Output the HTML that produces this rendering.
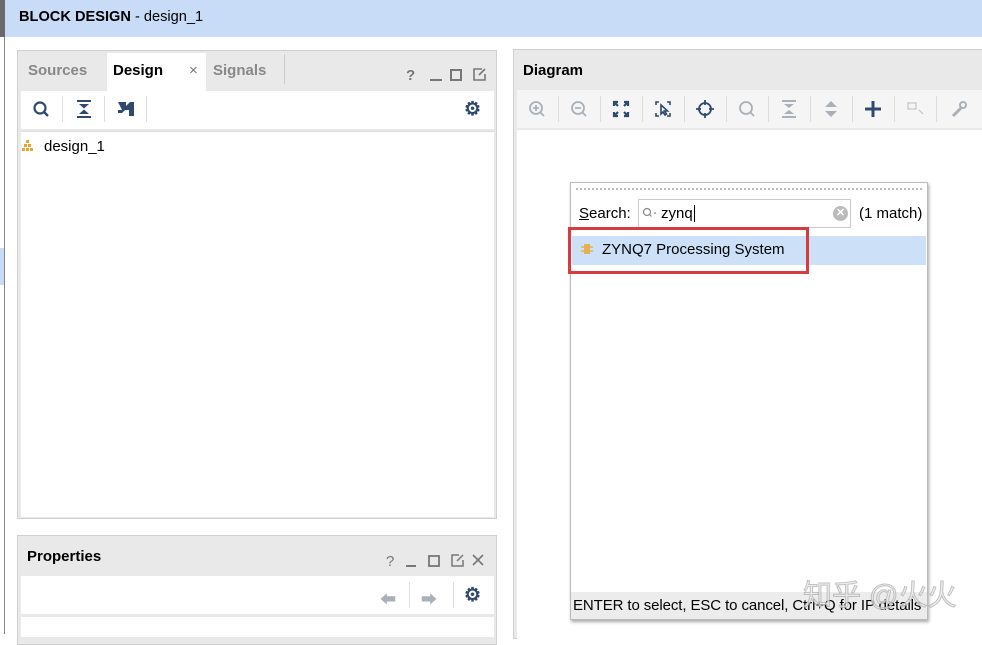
<!DOCTYPE html>
<html><head><meta charset="utf-8"><style>
*{box-sizing:border-box;margin:0;padding:0}
body{width:982px;height:634px;overflow:hidden;background:#fff;position:relative;font-family:"Liberation Sans","Noto Sans CJK SC",sans-serif;font-size:14px;color:#000}
.a{position:absolute;white-space:nowrap}
.ic{position:absolute;color:#2f4a6e;font-weight:bold}
.sep{position:absolute;width:1px;background:#dcdcdc}
.g{color:#aab0b8}
</style></head><body>
<div class="a" style="left:0;top:0;width:982px;height:37px;background:#c9dcf7"></div>
<div class="a" style="left:0;top:0;width:5px;height:37px;background:#6a6a6a"></div>
<div class="a" style="left:19px;top:9px;font-size:14.6px"><b>BLOCK DESIGN</b> - design_1</div>
<div class="a" style="left:4px;top:37px;width:1px;height:597px;background:#888"></div>
<div class="a" style="left:0;top:248px;width:4px;height:37px;background:#c9dcf7"></div>

<!-- left panel -->
<div class="a" style="left:17px;top:50px;width:480px;height:469px;background:#e9e9e9;border:1px solid #d0d0d0"></div>
<div class="a" style="left:107px;top:53px;width:99px;height:38px;background:#fff"></div>
<div class="a" style="left:28px;top:62px;color:#888;font-weight:bold;font-size:15px">Sources</div>
<div class="a" style="left:113px;top:62px;font-weight:bold;font-size:15px">Design</div>
<div class="a" style="left:189px;top:62px;color:#777;font-size:15px">×</div>
<div class="a" style="left:213px;top:62px;color:#888;font-weight:bold;font-size:15px">Signals</div>
<div class="sep" style="left:284px;top:54px;height:30px;background:#ccc"></div>
<svg class="a" style="left:404px;top:66px" width="84" height="16"><text x="2" y="14" font-family="Liberation Sans" font-weight="bold" font-size="15" fill="#777">?</text><line x1="26" y1="14" x2="38" y2="14" stroke="#777" stroke-width="2"/><rect x="47" y="4" width="10" height="10" fill="none" stroke="#777" stroke-width="2"/><path d="M78 3h-8v11h11v-6" fill="none" stroke="#777" stroke-width="1.6"/><path d="M75 9l6-6" stroke="#777" stroke-width="1.6"/></svg>
<div class="a" style="left:21px;top:91px;width:473px;height:38px;background:#fff"></div>
<svg class="a" style="left:32px;top:100px" width="18" height="18"><circle cx="8" cy="8" r="5.5" fill="none" stroke="#2f4a6e" stroke-width="2.2"/><line x1="12" y1="12" x2="16" y2="16" stroke="#2f4a6e" stroke-width="2.4"/></svg>
<div class="sep" style="left:62px;top:96px;height:26px"></div>
<svg class="a" style="left:76px;top:100px" width="16" height="18"><line x1="1" y1="1" x2="15" y2="1" stroke="#2f4a6e" stroke-width="2"/><line x1="1" y1="17" x2="15" y2="17" stroke="#2f4a6e" stroke-width="2"/><path d="M3 4h10l-5 4.5z M3 14h10l-5-4.5z" fill="#2f4a6e"/></svg>
<div class="sep" style="left:104px;top:96px;height:26px"></div>
<svg class="a" style="left:117px;top:100px" width="18" height="17"><path d="M1 2h8v4l4 -4h4v14h-5v-6h-4l-3 3h-4v-3h4z" fill="#2f4a6e"/></svg>
<div class="sep" style="left:146px;top:96px;height:26px"></div>
<div class="ic" style="left:464px;top:98px;font-size:19px">⚙</div>
<div class="a" style="left:21px;top:131px;width:473px;height:386px;background:#fff;border-top:1px solid #ddd"></div>
<svg class="a" style="left:21px;top:139px" width="14" height="13"><g fill="#e6a430"><rect x="5" y="1" width="3" height="3"/><rect x="3" y="5" width="3" height="3"/><rect x="7" y="5" width="3" height="3"/><rect x="1" y="9" width="3" height="3"/><rect x="5" y="9" width="3" height="3"/><rect x="9" y="9" width="3" height="3"/></g></svg>
<div class="a" style="left:44px;top:138px;font-size:15px">design_1</div>

<!-- properties -->
<div class="a" style="left:17px;top:535px;width:480px;height:110px;background:#e9e9e9;border:1px solid #d0d0d0"></div>
<div class="a" style="left:27px;top:548px;font-weight:bold;font-size:15px">Properties</div>
<svg class="a" style="left:384px;top:552px" width="104" height="16"><text x="2" y="14" font-family="Liberation Sans" font-size="15" fill="#777">?</text><line x1="22" y1="14" x2="32" y2="14" stroke="#777" stroke-width="2"/><rect x="45" y="4" width="10" height="10" fill="none" stroke="#777" stroke-width="1.8"/><path d="M75 3h-7v11h11v-6" fill="none" stroke="#777" stroke-width="1.5"/><path d="M73 9l6-6" stroke="#777" stroke-width="1.5"/><path d="M89 3l10 10M99 3l-10 10" stroke="#777" stroke-width="1.6"/></svg>
<div class="a" style="left:21px;top:576px;width:473px;height:38px;background:#fff"></div>
<div class="a g" style="left:380px;top:586px;font-size:16px">⬅</div>
<div class="sep" style="left:409px;top:582px;height:26px"></div>
<div class="a g" style="left:421px;top:586px;font-size:16px">➡</div>
<div class="sep" style="left:453px;top:582px;height:26px"></div>
<div class="ic" style="left:464px;top:584px;font-size:19px">⚙</div>
<div class="a" style="left:21px;top:617px;width:473px;height:20px;background:#fff"></div>

<!-- diagram -->
<div class="a" style="left:513px;top:49px;width:475px;height:590px;background:#e9e9e9;border:1px solid #d0d0d0"></div>
<div class="a" style="left:523px;top:62px;font-weight:bold;font-size:15px">Diagram</div>
<div class="a" style="left:517px;top:90px;width:470px;height:38px;background:#f5f5f5"></div>
<div class="a" style="left:517px;top:130px;width:470px;height:510px;background:#fff"></div>
<svg class="a" style="left:528px;top:100px" width="440" height="20" fill="none" stroke-width="1.8">
 <g stroke="#aab0b8"><circle cx="8" cy="8" r="6"/><path d="M12 12l4 4M5 8h6M8 5v6"/></g>
 <g stroke="#aab0b8" transform="translate(42 0)"><circle cx="8" cy="8" r="6"/><path d="M12 12l4 4M5 8h6"/></g>
 <g stroke="#2f4a6e" stroke-width="2.2" transform="translate(84 0)"><path d="M2 6V2h4M12 2h4v4M2 12v4h4M16 12v4h-4M3 3l3 3M15 3l-3 3M3 15l3-3M15 15l-3-3"/></g>
 <g stroke="#2f4a6e" stroke-width="1.6" transform="translate(126 0)"><path d="M2 5V2h3M13 2h3v3M2 13v3h3M16 13v3h-3"/><path d="M7 5l0 9 2-2 2 3 1.5-1-2-3h3z" fill="#fff"/></g>
 <g stroke="#2f4a6e" stroke-width="1.8" transform="translate(168 0)"><circle cx="9" cy="9" r="6"/><path d="M9 0v5M9 13v5M0 9h5M13 9h5"/></g>
 <g stroke="#aab0b8" transform="translate(210 0)"><circle cx="8" cy="8" r="6"/><path d="M12 12l4 4"/></g>
 <g fill="#aab0b8" stroke="none" transform="translate(254 0)"><rect x="0" y="0" width="14" height="2"/><rect x="0" y="16" width="14" height="2"/><path d="M2 4h10l-5 4zM2 14h10l-5-4z"/></g>
 <g fill="#aab0b8" stroke="none" transform="translate(296 0)"><path d="M1 7h12L7 1zM1 11h12L7 17z"/></g>
 <g stroke="#2f4a6e" stroke-width="3" transform="translate(336 0)"><path d="M9 1v16M1 9h16"/></g>
 <g stroke="#c0c4ca" stroke-width="1.2" transform="translate(380 0)"><rect x="0" y="3" width="8" height="6"/><path d="M11 10l4 4"/></g>
 <g stroke="#aab0b8" stroke-width="3" transform="translate(422 0)"><path d="M3 16l8-8"/><circle cx="13" cy="5" r="3" stroke-width="2"/></g>
</svg>
<div class="sep" style="left:558px;top:96px;height:26px"></div>
<div class="sep" style="left:600px;top:96px;height:26px"></div>
<div class="sep" style="left:642px;top:96px;height:26px"></div>
<div class="sep" style="left:684px;top:96px;height:26px"></div>
<div class="sep" style="left:726px;top:96px;height:26px"></div>
<div class="sep" style="left:768px;top:96px;height:26px"></div>
<div class="sep" style="left:810px;top:96px;height:26px"></div>
<div class="sep" style="left:852px;top:96px;height:26px"></div>
<div class="sep" style="left:894px;top:96px;height:26px"></div>
<div class="sep" style="left:936px;top:96px;height:26px"></div>

<!-- dialog -->
<div class="a" style="left:570px;top:182px;width:358px;height:438px;background:#fff;border:1px solid #bbb;box-shadow:1px 2px 3px rgba(0,0,0,.35)"></div>
<div class="a" style="left:576px;top:188px;width:346px;height:0;border-top:2px dotted #bbb"></div>
<div class="a" style="left:579px;top:205px;font-size:15px"><u>S</u>earch:</div>
<div class="a" style="left:638px;top:199px;width:213px;height:29px;border:1px solid #ccc;background:#fff"></div>
<svg class="a" style="left:642px;top:207px" width="16" height="12"><circle cx="5" cy="5" r="3.5" fill="none" stroke="#888" stroke-width="1.2"/><path d="M7.5 7.5l2 2M12 6h2" stroke="#888" stroke-width="1.2"/></svg>
<div class="a" style="left:661px;top:205px;font-size:15px">zynq<span style="border-left:1px solid #000;margin-left:1px"></span></div>
<div class="a" style="left:833px;top:206px;width:15px;height:15px;border-radius:50%;background:#bbb;color:#fff;font-size:11px;text-align:center;line-height:15px;font-weight:bold">✕</div>
<div class="a" style="left:859px;top:205px;font-size:15px">(1 match)</div>
<div class="a" style="left:572px;top:236px;width:354px;height:29px;background:#cce0f8"></div>
<svg class="a" style="left:580px;top:242px" width="14" height="14"><rect x="4" y="2" width="6" height="10" fill="#e6b050"/><g stroke="#e6b050" stroke-width="1.5"><line x1="1" y1="5" x2="13" y2="5"/><line x1="1" y1="9" x2="13" y2="9"/></g></svg>
<div class="a" style="left:602px;top:241px;font-size:15px">ZYNQ7 Processing System</div>
<div class="a" style="left:568px;top:227px;width:241px;height:47px;border:3px solid #d83a3f"></div>
<div class="a" style="left:571px;top:592px;width:356px;height:27px;background:#ececec"></div>
<div class="a" style="left:573px;top:597px;font-size:15px;letter-spacing:-0.1px">ENTER to select, ESC to cancel, Ctrl+Q for IP details</div>
<div class="a" style="left:803px;top:572px;font-size:29px;color:rgba(235,235,235,.75);-webkit-text-stroke:1px rgba(170,170,170,.7)">知乎 @火火</div>
</body></html>
